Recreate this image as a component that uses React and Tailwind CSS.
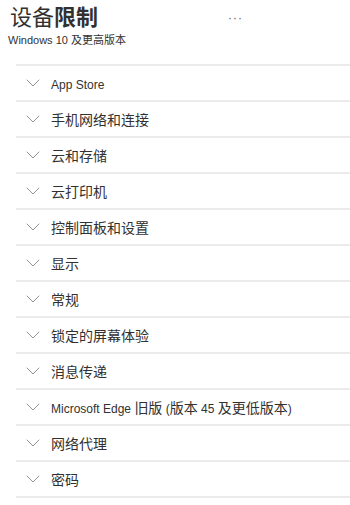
import { ChevronDown } from 'lucide-react';

const items = [
    'App Store',
    '手机网络和连接',
    '云和存储',
    '云打印机',
    '控制面板和设置',
    '显示',
    '常规',
    '锁定的屏幕体验',
    '消息传递',
    'Microsoft Edge 旧版 (版本 45 及更低版本)',
    '网络代理',
    '密码'
];

// CJK glyphs read a little larger than the latin text in the reference
function Label({ text }) {
    const parts = text.split(/([\u4e00-\u9fff]+)/).filter(Boolean);
    return (
        <span className="text-[12px] text-[#323130]">
            {parts.map((p, i) =>
                /[\u4e00-\u9fff]/.test(p)
                    ? <span key={i} className="text-[14px]">{p}</span>
                    : <span key={i}>{p}</span>
            )}
        </span>
    );
}

export default function App() {
    return (
        <div className="w-[350px] h-[505px] bg-white overflow-hidden" style={{ fontFamily: '"Liberation Sans", "Noto Sans CJK SC", sans-serif' }}>
            {/* Header */}
            <div className="pl-[10px] pt-[3px]">
                <div className="flex items-center w-[233px] justify-between">
                    <h1 className="text-[22px] leading-[30px] text-[#323130]">
                        设备<span className="font-bold">限制</span>
                    </h1>
                    <span className="text-[12px] text-[#605e5c] tracking-[1px] -mt-[1px]">···</span>
                </div>
                <p className="text-[11px] leading-[14px] -ml-[2px] text-[#323130]">Windows 10 及更高版本</p>
            </div>

            {/* Sections */}
            <div className="ml-[16px] mt-[17px] border-t-2 border-[#edebe9]">
                {items.map((item) => (
                    <div key={item} className="h-[36px] flex items-center border-b-2 border-[#edebe9]">
                        <ChevronDown size={24} strokeWidth={0.9} className="ml-[5px] text-[#8a8886]" />
                        <span className="ml-[6px] mt-[2px]">
                            <Label text={item} />
                        </span>
                    </div>
                ))}
            </div>
        </div>
    );
}
